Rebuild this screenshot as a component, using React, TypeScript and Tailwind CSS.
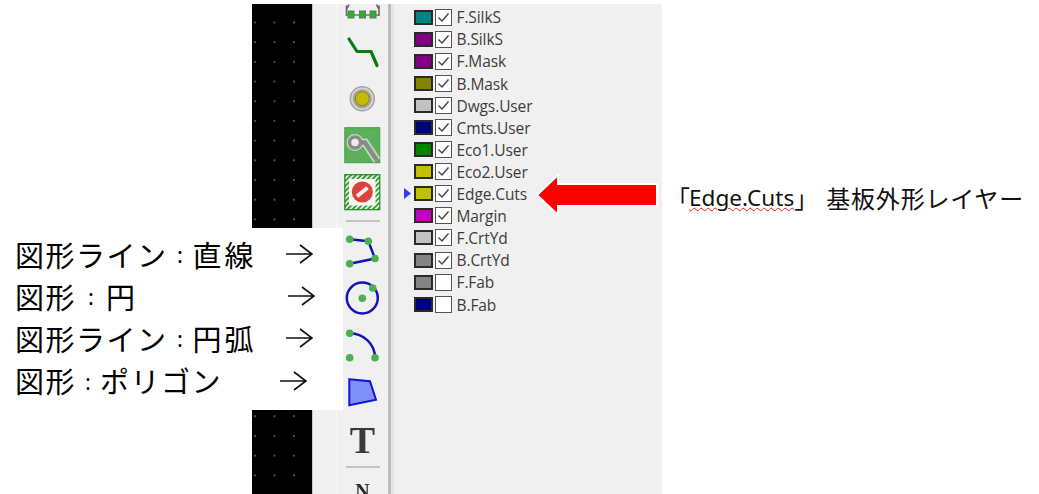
const layers = [
  { n: 'F.SilkS', c: 'bg-[#008484]', k: true },
  { n: 'B.SilkS', c: 'bg-[#840084]', k: true },
  { n: 'F.Mask', c: 'bg-[#840084]', k: true },
  { n: 'B.Mask', c: 'bg-[#848400]', k: true },
  { n: 'Dwgs.User', c: 'bg-[#c2c2c2]', k: true },
  { n: 'Cmts.User', c: 'bg-[#000084]', k: true },
  { n: 'Eco1.User', c: 'bg-[#008400]', k: true },
  { n: 'Eco2.User', c: 'bg-[#c2c200]', k: true },
  { n: 'Edge.Cuts', c: 'bg-[#c2c200]', k: true, active: true },
  { n: 'Margin', c: 'bg-[#c200c2]', k: true },
  { n: 'F.CrtYd', c: 'bg-[#c2c2c2]', k: true },
  { n: 'B.CrtYd', c: 'bg-[#848484]', k: true },
  { n: 'F.Fab', c: 'bg-[#848484]', k: false },
  { n: 'B.Fab', c: 'bg-[#000084]', k: false },
];

const cjk = "'Noto Sans CJK JP', sans-serif";

// Each tool icon is drawn in page coordinates: vb = top of its 47px slot.
function Tool({ top, children }: { top: number; children: React.ReactNode }) {
  return (
    <svg width="50" height="47" viewBox={`338 ${top} 50 47`} className="block shrink-0">
      {children}
    </svg>
  );
}

function Sep() {
  return (
    <div className="h-[11px] shrink-0 flex items-center px-2">
      <div className="h-[2px] w-full bg-[#c4c4c4]" />
    </div>
  );
}

const DOT = '#4cae50';
const BLUE = '#1414b8';

function Toolbar() {
  return (
    <div className="w-[50px] shrink-0 flex flex-col overflow-hidden bg-[#f0f0f0]">
      <div className="-mt-[23.5px] blur-[0.4px]">
        <Tool top={-19.5}>
          <path d="M346.5 5 L346.5 15.5 M379 5 L379 15.5 M346.5 9 L349 4 M379 9 L376.5 4" stroke="#666" strokeWidth="1.6" fill="none" />
          <path d="M346 14.5 H379" stroke="#6b7f6b" strokeWidth="1.4" />
          {[351, 362.5, 373].map((x) => (
            <g key={x}>
              <rect x={x - 3.5} y="10" width="7" height="8" fill="#5f7f5f" />
              <rect x={x - 2} y="11.5" width="4" height="5" fill="#12c812" />
            </g>
          ))}
        </Tool>
        <Tool top={27.5}>
          <path d="M349 38.5 L357 51 L371 51 L377 65" stroke="#0b7d0b" strokeWidth="3.2" fill="none" strokeLinecap="round" strokeLinejoin="round" />
        </Tool>
        <Tool top={74}>
          <circle cx="362.3" cy="97.7" r="12" fill="#d6d3d0" stroke="#a8a5a2" strokeWidth="1.5" />
          <circle cx="362.3" cy="97.7" r="9.5" fill="#a5a3a0" />
          <circle cx="362.3" cy="97.7" r="7" fill="#c6ba00" stroke="#807a10" strokeWidth="0.8" />
        </Tool>
        <Tool top={121.5}>
          <rect x="344.8" y="127.2" width="35" height="35" fill="#5dae5d" stroke="#3fa03f" />
          <path d="M358 142 L365 142 L377 160" stroke="#bcdcbc" strokeWidth="8" fill="none" />
          <circle cx="355" cy="142" r="8.5" fill="#bcdcbc" />
          <path d="M360 142 L365 142 L377 160" stroke="#8a8a8a" strokeWidth="4.5" fill="none" />
          <circle cx="355" cy="142" r="5.5" fill="#ececec" stroke="#8a8a8a" strokeWidth="3.5" />
        </Tool>
        <Tool top={168.5}>
          <defs>
            <pattern id="hatch" width="3.6" height="3.6" patternUnits="userSpaceOnUse" patternTransform="rotate(45)">
              <rect width="3.6" height="3.6" fill="#dff0df" />
              <rect width="1.8" height="3.6" fill="#3a9a3a" />
            </pattern>
          </defs>
          <rect x="344.8" y="174.2" width="35" height="35" fill="url(#hatch)" stroke="#1e8c1e" strokeWidth="1.2" />
          <rect x="349" y="178.5" width="26.5" height="26.5" fill="#f6f6ef" />
          <circle cx="362.3" cy="191.5" r="10.5" fill="#dc4040" />
          <path d="M357 195.8 L367.6 187.2" stroke="#f4f0f0" strokeWidth="4" />
        </Tool>
        <Sep />
        <Tool top={226.5}>
          <path d="M349.7 238.7 L368.3 240.7 L375 258 L349.7 263.3" stroke={BLUE} strokeWidth="2.5" fill="none" />
          {[[349.7, 238.7], [368.3, 240.7], [375, 258], [349.7, 263.3]].map(([x, y]) => (
            <circle key={x + ',' + y} cx={x} cy={y} r="3.8" fill={DOT} />
          ))}
        </Tool>
        <Tool top={273.5}>
          <circle cx="362.3" cy="297.5" r="15.5" stroke={BLUE} strokeWidth="2.5" fill="none" />
          <circle cx="362.3" cy="297.7" r="3.8" fill={DOT} />
          <circle cx="372.7" cy="287.5" r="3.8" fill={DOT} />
        </Tool>
        <Tool top={320.5}>
          <path d="M349.7 332.7 A25.3 24.6 0 0 1 375 357.3" stroke={BLUE} strokeWidth="2.5" fill="none" />
          <circle cx="349.7" cy="332.7" r="3.8" fill={DOT} />
          <circle cx="375" cy="357.3" r="3.8" fill={DOT} />
          <circle cx="349.7" cy="357.3" r="3.8" fill={DOT} />
        </Tool>
        <Tool top={367.5}>
          <path d="M349.3 378.7 L370 380.7 L376 399.3 L349.3 404.7 Z" fill="#7f8ff8" stroke="#1414d2" strokeWidth="2" />
        </Tool>
        <Tool top={414.5}>
          <text x="362.5" y="452.6" textAnchor="middle" fontFamily="'Liberation Serif', serif" fontWeight="700" fontSize="38" fill="#3a3a3a">T</text>
        </Tool>
        <Sep />
        <Tool top={473.5}>
          <text x="362.5" y="498" textAnchor="middle" fontFamily="'Liberation Serif', serif" fontWeight="700" fontSize="20" fill="#2a2a2a">N</text>
        </Tool>
      </div>
    </div>
  );
}

function Check() {
  return (
    <svg viewBox="0 0 15 15" className="w-[15px] h-[15px] block">
      <path d="M2.5 7.5 L6 11 L12.5 3.5" stroke="#444" strokeWidth="1.4" fill="none" />
    </svg>
  );
}

function LayerPanel() {
  return (
    <div className="w-[268px] shrink-0 bg-[#f0f0f0] pt-[2px] pl-[10px]">
      {layers.map((l) => (
        <div key={l.n} className="h-[22.1px] flex items-center">
          <div className="w-[9.5px] flex items-center">
            {l.active && (
              <svg width="7" height="11" viewBox="0 0 7 11" className="block">
                <path d="M0 0 L7 5.5 L0 11 Z" fill="#3a3af0" />
              </svg>
            )}
          </div>
          <div className={`w-[19px] h-[15px] border-2 border-[#2a2a2a] ${l.c}`} />
          <div className="w-[17px] h-[17px] ml-[2px] bg-white border border-[#555555] flex items-center justify-center">
            {l.k && <Check />}
          </div>
          <span className="ml-[5px] mt-[2px] text-[15.5px] leading-none tracking-[-0.1px] text-[#3c3c3c] font-['Open_Sans',sans-serif]">{l.n}</span>
        </div>
      ))}
    </div>
  );
}

function Arrow() {
  return (
    <svg width="27" height="20" viewBox="0 0 27 20" className="block shrink-0">
      <path d="M0 10 H26 M14 1 L26 10 L14 19" stroke="#111" strokeWidth="1.6" fill="none" />
    </svg>
  );
}

function Label({ parts, mr }: { parts: React.ReactNode; mr: string }) {
  return (
    <div className="h-[42.2px] flex items-center justify-between">
      <div className="text-[29px] leading-none tracking-[1.5px] text-black whitespace-nowrap flex items-center" style={{ fontFamily: cjk }}>
        {parts}
      </div>
      <div className={mr}>
        <Arrow />
      </div>
    </div>
  );
}

function Colon({ w }: { w: string }) {
  return <span className={`${w} text-center text-[22px] tracking-normal font-['Noto_Sans',sans-serif]`}>:</span>;
}

export default function App() {
  return (
    <div className="relative w-[1039px] h-[494px] overflow-hidden bg-white">
      <div className="flex h-full pt-[4px] pl-[252px]">
        <div className="w-[60px] shrink-0 bg-black bg-[radial-gradient(circle_at_3px_3px,#707070_0,#505050_0.7px,transparent_1.3px)] bg-[size:19.5px_19.7px] bg-[position:0px_15.5px]" />
        <div className="w-[26px] shrink-0 bg-[#f0f0f0] border-l border-[#c8c8c8] border-r-[2px] border-r-[#f5f5f5]" />
        <Toolbar />
        <div className="w-[6px] shrink-0 bg-[#e6e6e6] border-l-[3px] border-[#bcbcbc]" />
        <LayerPanel />
      </div>

      {/* callout arrow */}
      <svg width="126" height="46" viewBox="535 172 126 46" className="absolute left-[535px] top-[172px]">
        <path d="M537 195 L558 175 L558 184 L657 184 L657 206 L558 206 L558 215 Z" fill="#ff0000" stroke="#ffffff" strokeWidth="2" />
      </svg>

      {/* callout caption */}
      <div className="absolute left-[666px] top-[181px] flex items-center whitespace-nowrap text-[24px] leading-[34px] text-[#111]" style={{ fontFamily: cjk }}>
        <span>「</span>
        <span className="-ml-[1px] text-[22.6px] underline decoration-wavy decoration-[#d02020] decoration-1 font-['Noto_Sans',sans-serif]">Edge.Cuts</span>
        <span>」</span>
        <span className="ml-[8px] tracking-[0.8px]">基板外形レイヤー</span>
      </div>

      {/* tool legend */}
      <div className="absolute left-0 top-[228px] w-[343px] h-[182px] bg-white pl-[15px] pt-[5px]">
        <Label mr="mr-[30px]" parts={<><span>図形ライン</span><Colon w="w-[25px]" /><span className="tracking-[3px]">直線</span></>} />
        <Label mr="mr-[28px]" parts={<><span>図形</span><Colon w="w-[30px]" /><span>円</span></>} />
        <Label mr="mr-[30px]" parts={<><span>図形ライン</span><Colon w="w-[25px]" /><span className="tracking-[3px]">円弧</span></>} />
        <Label mr="mr-[36px]" parts={<><span>図形</span><Colon w="w-[24px]" /><span>ポリゴン</span></>} />
      </div>
    </div>
  );
}
